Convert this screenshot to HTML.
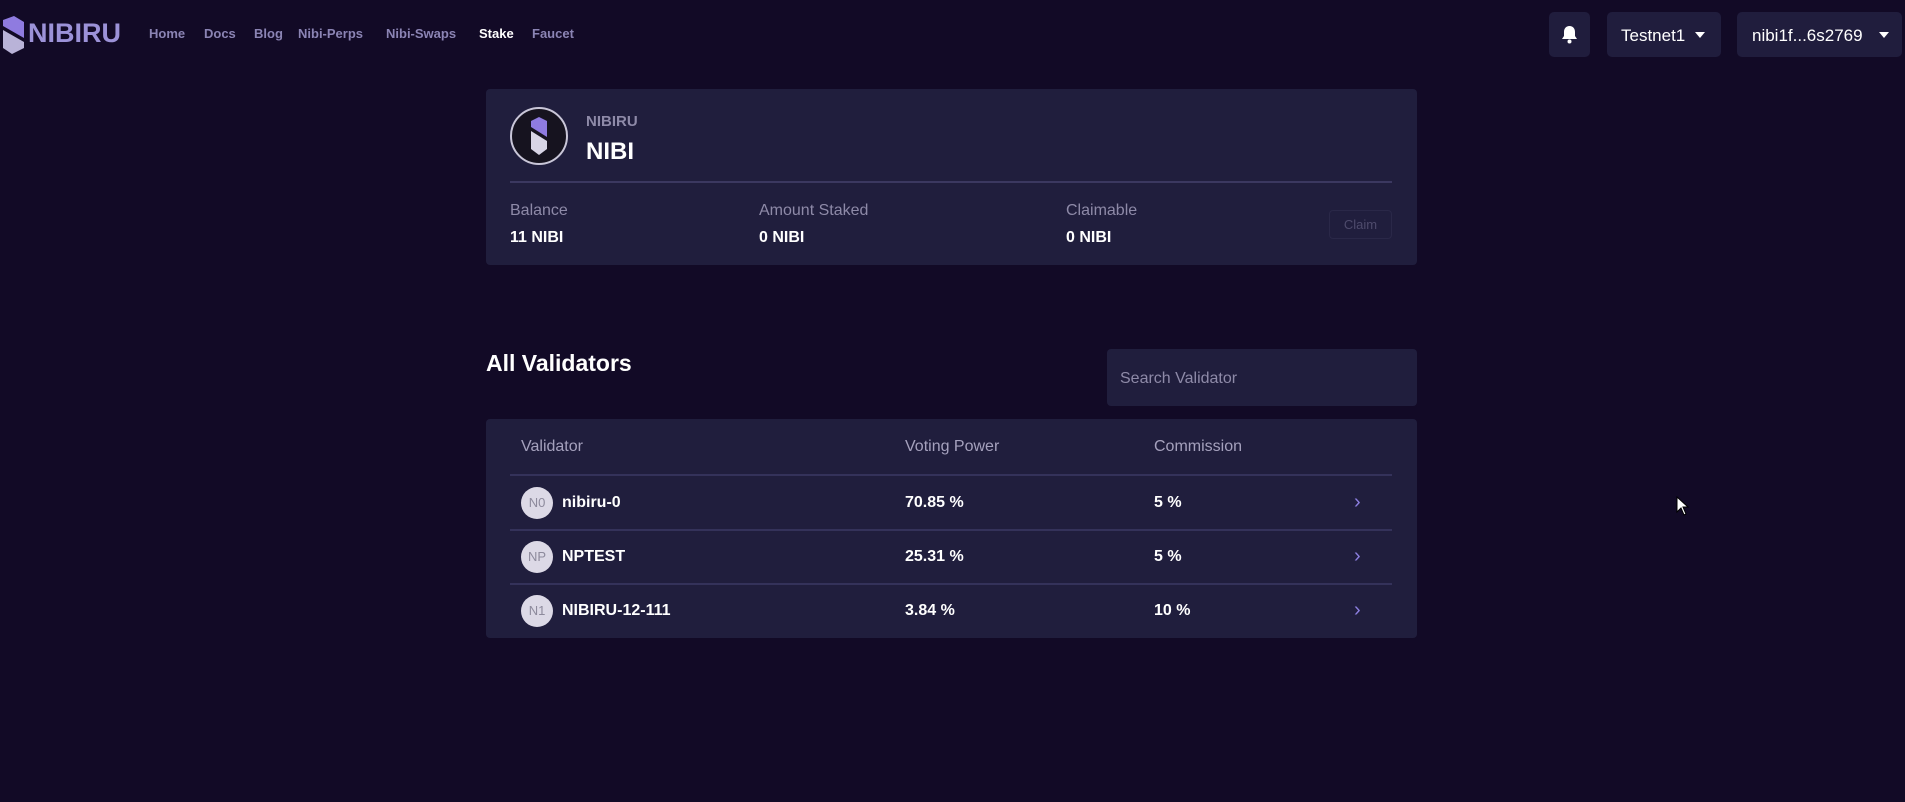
<!DOCTYPE html>
<html><head><meta charset="utf-8"><style>
*{box-sizing:border-box;margin:0;padding:0}
body{width:1905px;height:802px;background:#120a26;font-family:"Liberation Sans",sans-serif;color:#fff;position:relative;overflow:hidden}
.a{position:absolute}
.nav a{position:absolute;top:26px;font-size:13px;font-weight:bold;color:#8b84b4;text-decoration:none}
.btn{position:absolute;background:#201d3d;border-radius:5px}
.card{position:absolute;background:#201e3d;border-radius:4px}
.lbl{font-size:16px;color:#8e8aa8}
.val{font-size:16px;font-weight:bold}
.hd{font-size:16px;color:#a5a1bd;top:438px}
.row{font-size:16px;font-weight:bold}
.av{position:absolute;left:521px;width:32px;height:32px;border-radius:50%;background:#dcd9e6;color:#8d8a9c;font-size:13px;text-align:center;line-height:32px}
.ln{position:absolute;left:510px;width:882px;height:2px;background:#34325a}
.chev{position:absolute;left:1354px;color:#8c7fe0;font-size:20px}
</style></head><body>
<svg class="a" style="left:0;top:16px" width="26" height="38" viewBox="0 0 26 38"><path d="M3 4 L14 0 L24 6 L24 22 L3 10Z" fill="#8f7be0"/><path d="M3 14 L24 26 L24 32 L12 38 L3 32Z" fill="#b9b3d8"/></svg>
<div class="a" style="left:28px;top:18px;font-size:27px;font-weight:bold;color:#9c92d8">NIBIRU</div>
<div class="nav">
<a style="left:149px">Home</a><a style="left:204px">Docs</a><a style="left:254px">Blog</a><a style="left:298px">Nibi-Perps</a><a style="left:386px">Nibi-Swaps</a><a style="left:479px;color:#fff">Stake</a><a style="left:532px">Faucet</a>
</div>
<div class="btn" style="left:1549px;top:12px;width:41px;height:45px"><svg class="a" style="left:12px;top:13px" width="17" height="19" viewBox="0 0 17 19"><path d="M8.5 1 C5 1 3 3.5 3 7 L3 11 L1 14 L16 14 L14 11 L14 7 C14 3.5 12 1 8.5 1Z" fill="#fff"/><circle cx="8.5" cy="16.5" r="2" fill="#fff"/></svg></div>
<div class="btn" style="left:1607px;top:12px;width:114px;height:45px"><span class="a" style="left:14px;top:14px;font-size:17px">Testnet1</span><span class="a" style="left:88px;top:20px;border:5px solid transparent;border-top:6px solid #fff"></span></div>
<div class="btn" style="left:1737px;top:12px;width:165px;height:45px"><span class="a" style="left:15px;top:14px;font-size:17px">nibi1f...6s2769</span><span class="a" style="left:142px;top:20px;border:5px solid transparent;border-top:6px solid #fff"></span></div>

<div class="card" style="left:486px;top:89px;width:931px;height:176px"></div>
<div class="a" style="left:510px;top:107px;width:58px;height:58px;border-radius:50%;background:#16131f;border:2px solid #c9c6d8"></div>
<svg class="a" style="left:529px;top:117px" width="20" height="38" viewBox="0 0 20 38"><path d="M2 4 L10 0 L18 4 L18 20 L2 10Z" fill="#8f7be0"/><path d="M2 14 L18 24 L18 32 L10 38 L2 32Z" fill="#d8d5e6"/></svg>
<div class="a lbl" style="left:586px;top:113px;font-size:15px;font-weight:bold">NIBIRU</div>
<div class="a" style="left:586px;top:138px;font-size:24px;font-weight:bold">NIBI</div>
<div class="ln" style="top:181px;background:#3b3860"></div>
<div class="a lbl" style="left:510px;top:202px">Balance</div>
<div class="a lbl" style="left:759px;top:202px">Amount Staked</div>
<div class="a lbl" style="left:1066px;top:202px">Claimable</div>
<div class="a val" style="left:510px;top:229px">11 NIBI</div>
<div class="a val" style="left:759px;top:229px">0 NIBI</div>
<div class="a val" style="left:1066px;top:229px">0 NIBI</div>
<div class="a" style="left:1329px;top:210px;width:63px;height:29px;border:1px solid #2a2848;border-radius:4px;color:#4e4b6c;font-size:13px;text-align:center;line-height:27px">Claim</div>

<div class="a" style="left:486px;top:350px;font-size:23px;font-weight:bold">All Validators</div>
<div class="card" style="left:1107px;top:349px;width:310px;height:57px"><span class="a" style="left:13px;top:21px;font-size:16px;color:#8e8aa8">Search Validator</span></div>

<div class="card" style="left:486px;top:419px;width:931px;height:219px"></div>
<div class="a hd" style="left:521px">Validator</div>
<div class="a hd" style="left:905px">Voting Power</div>
<div class="a hd" style="left:1154px">Commission</div>
<div class="ln" style="top:474px"></div>
<div class="ln" style="top:529px"></div>
<div class="ln" style="top:583px"></div>

<div class="av" style="top:487px">N0</div><div class="a row" style="left:562px;top:494px">nibiru-0</div><div class="a row" style="left:905px;top:494px">70.85 %</div><div class="a row" style="left:1154px;top:494px">5 %</div><div class="chev" style="top:491px">›</div>
<div class="av" style="top:541px">NP</div><div class="a row" style="left:562px;top:548px">NPTEST</div><div class="a row" style="left:905px;top:548px">25.31 %</div><div class="a row" style="left:1154px;top:548px">5 %</div><div class="chev" style="top:545px">›</div>
<div class="av" style="top:595px">N1</div><div class="a row" style="left:562px;top:602px">NIBIRU-12-111</div><div class="a row" style="left:905px;top:602px">3.84 %</div><div class="a row" style="left:1154px;top:602px">10 %</div><div class="chev" style="top:599px">›</div>

<svg class="a" style="left:1676px;top:496px" width="14" height="20" viewBox="0 0 14 20"><path d="M1 1 L1 16 L5 12 L8 19 L10 18 L7 11 L12 11Z" fill="#fff" stroke="#000" stroke-width="1"/></svg>
</body></html>
